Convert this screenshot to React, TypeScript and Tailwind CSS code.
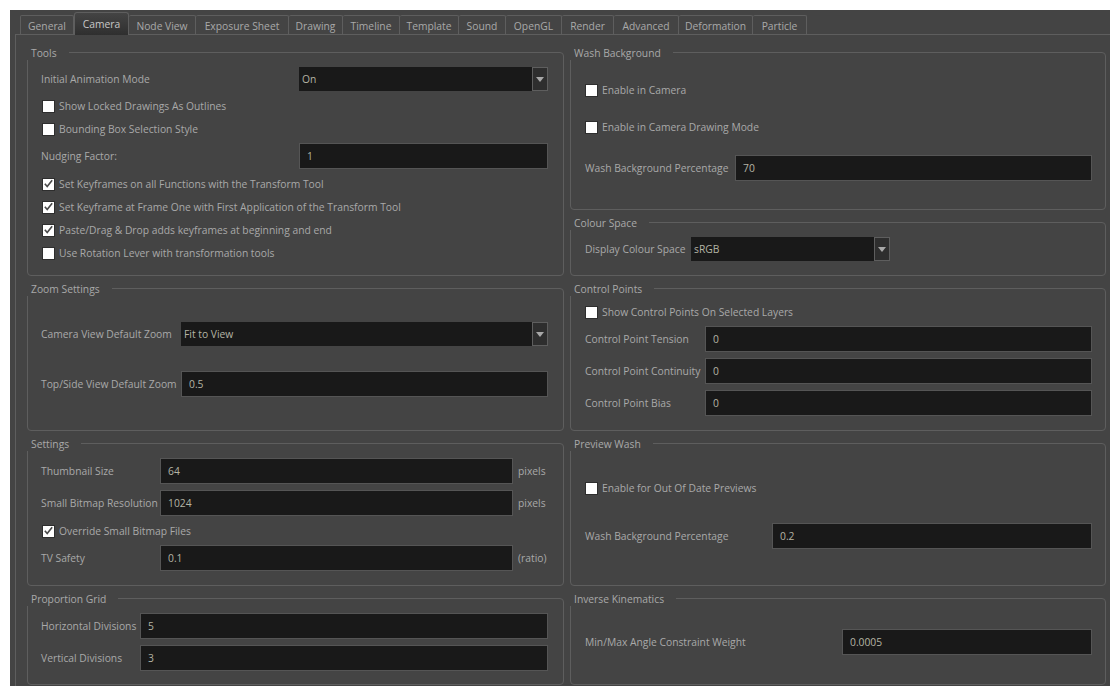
import { ReactNode } from "react";

const tabs = [
  { name: "General", w: "w-[54px]" },
  { name: "Camera", w: "w-[55px]" },
  { name: "Node View", w: "w-[67px]" },
  { name: "Exposure Sheet", w: "w-[93px]" },
  { name: "Drawing", w: "w-[54px]" },
  { name: "Timeline", w: "w-[57px]" },
  { name: "Template", w: "w-[59px]" },
  { name: "Sound", w: "w-[47px]" },
  { name: "OpenGL", w: "w-[56px]" },
  { name: "Render", w: "w-[52px]" },
  { name: "Advanced", w: "w-[65px]" },
  { name: "Deformation", w: "w-[74px]" },
  { name: "Particle", w: "w-[54px]" },
];

function Group({ title, className, children }: { title: string; className: string; children?: ReactNode }) {
  return (
    <div className={`relative rounded-[4px] border border-[#5e5e5e] ${className}`}>
      <div className="absolute -left-px -top-[7px] bg-[#444444] pl-[4px] pr-[12px] text-[#a9a9a9] leading-[14px]">{title}</div>
      {children}
    </div>
  );
}

function Input({ value, className = "" }: { value: string; className?: string }) {
  return (
    <div className={`flex h-[26px] items-center border border-[#555555] bg-[#191919] pl-[7px] pt-[1px] text-[#b4b4a4] ${className}`}>{value}</div>
  );
}

function Combo({ value, className = "" }: { value: string; className?: string }) {
  return (
    <div className={`flex h-[24px] ${className}`}>
      <div className="flex flex-1 items-center bg-[#191919] pl-[3px] pt-[2px] text-[#b4b4a4]">{value}</div>
      <div className="flex w-[16px] items-center justify-center border border-[#5e5e5e] bg-[#2e2e2e]">
        <div className="h-0 w-0 border-x-[4px] border-t-[5px] border-x-transparent border-t-[#a8a8a8]" />
      </div>
    </div>
  );
}

function Label({ text, className = "" }: { text: string; className?: string }) {
  return <span className={`pt-[2px] ${className}`}>{text}</span>;
}

function Check({ label, checked = false, className = "" }: { label: string; checked?: boolean; className?: string }) {
  return (
    <div className={`flex h-[16px] items-center gap-[4px] ${className}`}>
      <div className="flex h-[13px] w-[13px] items-center justify-center border border-[#2e2e2e] bg-white">
        {checked && (
          <svg viewBox="0 0 12 12" className="h-[12px] w-[12px]">
            <path d="M2 5.8 L4.6 8.8 L10 1.8" fill="none" stroke="#4a4a4a" strokeWidth="1.8" />
          </svg>
        )}
      </div>
      <Label text={label} />
    </div>
  );
}

export default function App() {
  return (
    <div className="h-[696px] w-[1120px] bg-white pl-[10px] pr-[10px] pt-[10px] font-['Open_Sans',sans-serif] text-[10.3px] text-[#a9a9a9] whitespace-nowrap">
      <div className="flex h-[676px] flex-col bg-[#444444]">
        {/* TABS */}
        <div className="flex h-[24px] items-end pl-[10px]">
          {tabs.map((t) =>
            t.name === "Camera" ? (
              <div
                key={t.name}
                className={`z-10 -mb-px flex h-[23px] items-center justify-center rounded-t-[3px] border border-b-0 border-[#5e5e5e] bg-gradient-to-b from-[#444444] to-[#2f2f2f] pt-[1px] text-[#c8c8c8] ${t.w}`}
              >
                {t.name}
              </div>
            ) : (
              <div
                key={t.name}
                className={`flex h-[19px] items-center justify-center rounded-t-[2px] border border-b-0 border-l-0 border-[#5e5e5e] pt-[4px] first:border-l ${t.w}`}
              >
                {t.name}
              </div>
            ),
          )}
        </div>

        {/* PANE */}
        <div className="ml-[5px] flex flex-1 gap-[6px] border-l border-t border-[#5e5e5e] pl-[11px] pr-[4px] pt-[17px]">
          {/* LEFT */}
          <div className="flex w-[537px] flex-col">
            <Group title="Tools" className="h-[224px] pl-[13px] pr-[15px]">
              <div className="mt-[14px] flex h-[24px] items-center justify-between">
                <Label text="Initial Animation Mode" />
                <Combo value="On" className="w-[249px]" />
              </div>
              <Check label="Show Locked Drawings As Outlines" className="ml-[1px] mt-[7px]" />
              <Check label="Bounding Box Selection Style" className="ml-[1px] mt-[7px]" />
              <div className="mt-[6px] flex items-center justify-between">
                <Label text="Nudging Factor:" />
                <Input value="1" className="w-[249px]" />
              </div>
              <Check checked label="Set Keyframes on all Functions with the Transform Tool" className="ml-[1px] mt-[7px]" />
              <Check checked label="Set Keyframe at Frame One with First Application of the Transform Tool" className="ml-[1px] mt-[7px]" />
              <Check checked label="Paste/Drag & Drop adds keyframes at beginning and end" className="ml-[1px] mt-[7px]" />
              <Check label="Use Rotation Lever with transformation tools" className="ml-[1px] mt-[7px]" />
            </Group>
            <Group title="Zoom Settings" className="mt-[12px] h-[143px] pl-[13px] pr-[15px]">
              <div className="mt-[33px] flex items-center">
                <Label text="Camera View Default Zoom" className="w-[140px]" />
                <Combo value="Fit to View" className="flex-1" />
              </div>
              <div className="mt-[25px] flex items-center">
                <Label text="Top/Side View Default Zoom" className="w-[140px]" />
                <Input value="0.5" className="flex-1" />
              </div>
            </Group>
            <Group title="Settings" className="mt-[12px] h-[143px] pl-[13px] pr-[15px]">
              <div className="mt-[14px] flex items-center">
                <Label text="Thumbnail Size" className="w-[119px]" />
                <Input value="64" className="w-[353px]" />
                <Label text="pixels" className="ml-[5px]" />
              </div>
              <div className="mt-[6px] flex items-center">
                <Label text="Small Bitmap Resolution" className="w-[119px]" />
                <Input value="1024" className="w-[353px]" />
                <Label text="pixels" className="ml-[5px]" />
              </div>
              <Check checked label="Override Small Bitmap Files" className="ml-[1px] mt-[7px]" />
              <div className="mt-[6px] flex items-center">
                <Label text="TV Safety" className="w-[119px]" />
                <Input value="0.1" className="w-[353px]" />
                <Label text="(ratio)" className="ml-[5px]" />
              </div>
            </Group>
            <Group title="Proportion Grid" className="mt-[12px] mb-[1px] flex-1 pl-[13px] pr-[15px]">
              <div className="mt-[14px] flex items-center">
                <Label text="Horizontal Divisions" className="w-[99px]" />
                <Input value="5" className="flex-1" />
              </div>
              <div className="mt-[6px] flex items-center">
                <Label text="Vertical Divisions" className="w-[99px]" />
                <Input value="3" className="flex-1" />
              </div>
            </Group>
          </div>

          {/* RIGHT */}
          <div className="flex w-[536px] flex-col">
            <Group title="Wash Background" className="h-[158px] pl-[14px] pr-[13px]">
              <Check label="Enable in Camera" className="mt-[29px]" />
              <Check label="Enable in Camera Drawing Mode" className="mt-[21px]" />
              <div className="mt-[20px] flex items-center">
                <Label text="Wash Background Percentage" className="w-[150px]" />
                <Input value="70" className="flex-1" />
              </div>
            </Group>
            <Group title="Colour Space" className="mt-[12px] h-[54px] pl-[14px] pr-[13px]">
              <div className="mt-[14px] flex items-center">
                <Label text="Display Colour Space" className="w-[106px]" />
                <Combo value="sRGB" className="w-[199px]" />
              </div>
            </Group>
            <Group title="Control Points" className="mt-[12px] h-[143px] pl-[14px] pr-[13px]">
              <Check label="Show Control Points On Selected Layers" className="mt-[15px]" />
              <div className="mt-[6px] flex items-center">
                <Label text="Control Point Tension" className="w-[120px]" />
                <Input value="0" className="flex-1" />
              </div>
              <div className="mt-[6px] flex items-center">
                <Label text="Control Point Continuity" className="w-[120px]" />
                <Input value="0" className="flex-1" />
              </div>
              <div className="mt-[6px] flex items-center">
                <Label text="Control Point Bias" className="w-[120px]" />
                <Input value="0" className="flex-1" />
              </div>
            </Group>
            <Group title="Preview Wash" className="mt-[12px] h-[143px] pl-[14px] pr-[13px]">
              <Check label="Enable for Out Of Date Previews" className="mt-[36px]" />
              <div className="mt-[27px] flex items-center">
                <Label text="Wash Background Percentage" className="w-[187px]" />
                <Input value="0.2" className="flex-1" />
              </div>
            </Group>
            <Group title="Inverse Kinematics" className="mt-[12px] mb-[1px] flex-1 pl-[14px] pr-[13px]">
              <div className="mt-[30px] flex items-center">
                <Label text="Min/Max Angle Constraint Weight" className="w-[257px]" />
                <Input value="0.0005" className="flex-1" />
              </div>
            </Group>
          </div>
        </div>
      </div>
    </div>
  );
}
